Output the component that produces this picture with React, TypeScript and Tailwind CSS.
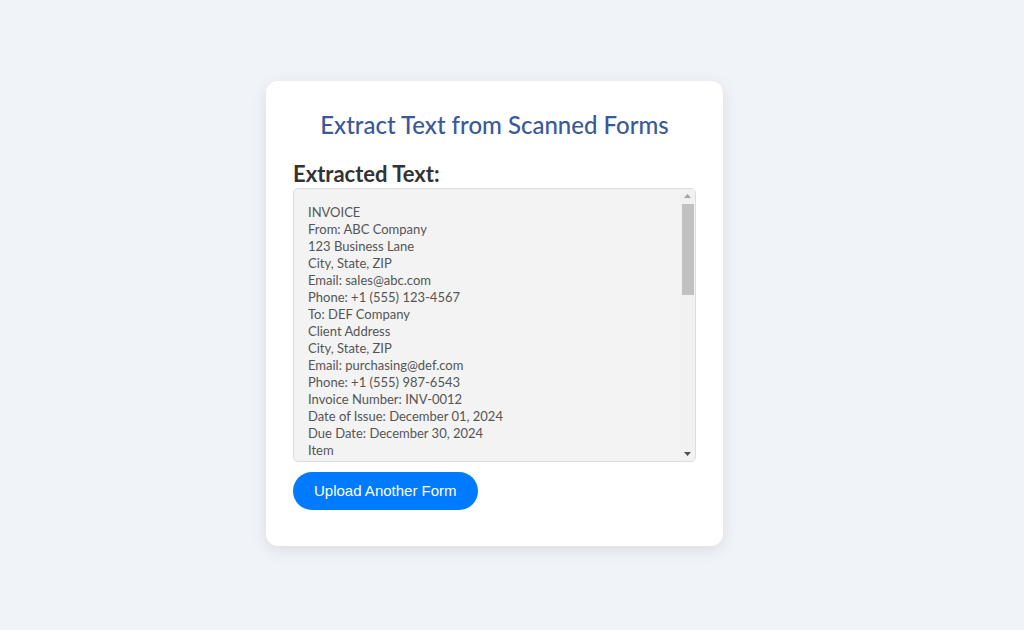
const extracted = `INVOICE
From: ABC Company
123 Business Lane
City, State, ZIP
Email: sales@abc.com
Phone: +1 (555) 123-4567
To: DEF Company
Client Address
City, State, ZIP
Email: purchasing@def.com
Phone: +1 (555) 987-6543
Invoice Number: INV-0012
Date of Issue: December 01, 2024
Due Date: December 30, 2024
Item
Description
Quantity
Unit Price
Total
Widget A
High-quality widget
10
$15.00
$150.00
Widget B
Standard widget
5
$20.00
$100.00
Service Fee
Installation service
1
$50.00
$50.00
Subtotal: $300.00
Tax (10%): $30.00
Total Due: $330.00
Payment Terms: Net 30
Bank: First National Bank
Account Number: 123456789
Routing Number: 987654321
Thank you for your business!`;

export default function App() {
  return (
    <div className="min-h-screen bg-[#f0f4f8] pt-[81px] pl-[266px]" style={{ fontFamily: '"Segoe UI", "Lato", "Open Sans", sans-serif' }}>
      <div className="w-[457px] h-[465px] bg-white rounded-xl shadow-[0_4px_16px_rgba(0,0,0,0.1)] px-[27px] pt-[28px]">
        <h1 className="text-center text-[24px] leading-[32px] font-medium text-[#3b5998]">
          Extract Text from Scanned Forms
        </h1>
        <h2 className="mt-[18px] text-[22px] leading-[29px] font-bold text-[#333]">Extracted Text:</h2>
        <div className="relative w-[403px] h-[274px]">
          <textarea
            readOnly
            value={extracted}
            className="block w-full h-full resize-none overflow-hidden bg-[#f3f3f3] border border-[#dddddd] rounded-[5px] pl-[14px] pr-6 pt-[15px] pb-2 text-[13px] leading-[17px] text-[#555] outline-none"
            style={{ fontFamily: '"Segoe UI", "Lato", "Open Sans", sans-serif' }}
          />
          {/* scrollbar */}
          <div className="absolute top-px bottom-px right-px w-[15px] flex flex-col items-center bg-[#f1f1f1] rounded-r-[4px]">
            <div className="h-[14px] flex items-center justify-center">
              <svg width="7" height="4" viewBox="0 0 7 4"><path d="M3.5 0L7 4H0z" fill="#a3a3a3" /></svg>
            </div>
            <div className="mt-[1px] w-[12px] h-[91px] bg-[#c1c1c1]" />
            <div className="flex-1" />
            <div className="h-[14px] flex items-center justify-center">
              <svg width="7" height="4" viewBox="0 0 7 4"><path d="M0 0H7L3.5 4z" fill="#505050" /></svg>
            </div>
          </div>
        </div>
        <button
          className="mt-[10px] h-[38px] px-[21px] rounded-full bg-[#007bff] text-white text-[15px]"
          style={{ fontFamily: '"Liberation Sans", Arial, sans-serif' }}
        >
          Upload Another Form
        </button>
      </div>
    </div>
  );
}
